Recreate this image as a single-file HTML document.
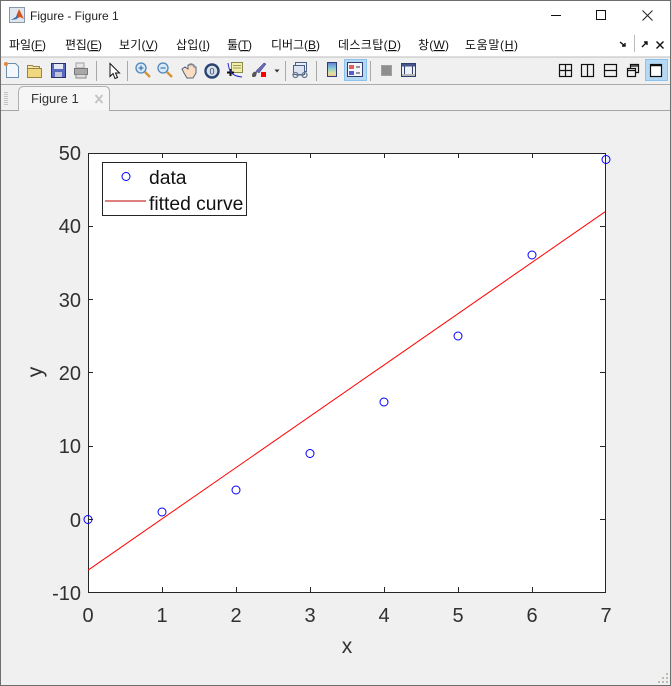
<!DOCTYPE html>
<html><head><meta charset="utf-8"><style>
html,body{margin:0;padding:0;background:#fff}
body{width:671px;height:686px;overflow:hidden}
svg{display:block}
.m{font:12px "Liberation Sans","Noto Sans CJK KR",sans-serif;fill:#111}
.m tspan{text-decoration:underline}
.t{font:20px "Liberation Sans",sans-serif;fill:#303030}
.l{font:19.300px "Liberation Sans",sans-serif;fill:#111}
</style></head><body>
<svg width="671" height="686" viewBox="0 0 671 686" xmlns="http://www.w3.org/2000/svg">
<rect width="671" height="686" fill="#fff"/>
<!-- chrome bands -->
<rect x="1" y="57" width="669" height="27" fill="#f0f0f0"/>
<rect x="1" y="85" width="669" height="600" fill="#f0f0f0"/>
<rect x="0" y="56.500" width="671" height="1" fill="#bdbdbd"/>
<rect x="0" y="84" width="671" height="1" fill="#ababab"/>
<rect x="0" y="110" width="671" height="1" fill="#a6a6a6"/>
<!-- window border -->
<rect x="0.500" y="0.500" width="670" height="685" fill="none" stroke="#6e6e6e"/>
<!-- title icon -->
<rect x="9.500" y="7.500" width="15" height="15" fill="#dfe6ee" stroke="#8a97a6"/>
<path d="M11 20l5-3 3-8 2 4 3 6-4-2-2 1z" fill="#d8541e"/>
<path d="M11 20l5-3 2-5-1 7z" fill="#2a6fb0"/>
<text x="30" y="20" style="font:12px 'Liberation Sans',sans-serif" fill="#222">Figure - Figure 1</text>
<!-- window buttons -->
<path d="M551 15.500h10" stroke="#111" fill="none"/>
<rect x="596.500" y="10.500" width="9" height="9" fill="none" stroke="#111"/>
<path d="M642.500 10.500l10 10m0-10l-10 10" stroke="#222" fill="none"/>
<!-- menu -->
<text class="m" x="9" y="49" textLength="37">파일(<tspan>F</tspan>)</text>
<text class="m" x="65" y="49" textLength="37">편집(<tspan>E</tspan>)</text>
<text class="m" x="119" y="49" textLength="39">보기(<tspan>V</tspan>)</text>
<text class="m" x="176" y="49" textLength="34">삽입(<tspan>I</tspan>)</text>
<text class="m" x="227" y="49" textLength="25">툴(<tspan>T</tspan>)</text>
<text class="m" x="271" y="49" textLength="49">디버그(<tspan>B</tspan>)</text>
<text class="m" x="338" y="49" textLength="63">데스크탑(<tspan>D</tspan>)</text>
<text class="m" x="418" y="49" textLength="31">창(<tspan>W</tspan>)</text>
<text class="m" x="465" y="49" textLength="53">도움말(<tspan>H</tspan>)</text>
<path d="M620 42l5 4m0-3v3h-3" stroke="#111" stroke-width="1.400" fill="none"/>
<rect x="634" y="35" width="1" height="17" fill="#bbb"/>
<path d="M642 47l5-5m-3 0h3v3" stroke="#111" stroke-width="1.400" fill="none"/>
<path d="M656.500 41.500l7 7m0-7l-7 7" stroke="#111" stroke-width="1.400" fill="none"/>
<!-- toolbar separators -->
<g fill="#a8a8a8">
<rect x="96" y="61" width="1" height="20"/><rect x="127" y="61" width="1" height="20"/>
<rect x="285" y="61" width="1" height="20"/><rect x="316" y="61" width="1" height="20"/><rect x="370" y="61" width="1" height="20"/>
</g>
<!-- new -->
<path d="M6.500 63.500h9l3 3v11h-12z" fill="#f4f8fc" stroke="#6a8fb0"/><circle cx="6" cy="64" r="2" fill="#e8873a"/>
<!-- open -->
<path d="M27.500 68.500v-3h5l1 1h6v2" fill="#f6e6a8" stroke="#9c8440"/><path d="M27.500 77.500v-9h14v9z" fill="#f1d77e" stroke="#9c8440"/>
<!-- save -->
<rect x="51.500" y="63.500" width="14" height="14" fill="#5a6ac0" stroke="#2a3270"/><rect x="54" y="64" width="9" height="5" fill="#e4e8f2"/><rect x="55" y="72" width="7" height="5" fill="#c2c6d2"/>
<!-- print -->
<path d="M76 63h8v5h-8z" fill="#e6e6e6" stroke="#a0a0a0"/><path d="M74.500 68.500h13v6h-13z" fill="#a8a8a8" stroke="#777"/><path d="M76 74.500h10v3.500h-10z" fill="#ddd" stroke="#888"/>
<!-- arrow -->
<path d="M110 63.500v13l3-3 2 5 2.500-1-2-4.500h4z" fill="#fff" stroke="#111"/>
<!-- zoom in/out -->
<circle cx="141" cy="68" r="5" fill="#d6eafa" stroke="#4d86b8" stroke-width="1.300"/><path d="M145 72l5 5" stroke="#d79234" stroke-width="2.400"/><path d="M138.500 68h5m-2.500-2.500v5" stroke="#2a5f96"/>
<circle cx="163" cy="68" r="5" fill="#d6eafa" stroke="#4d86b8" stroke-width="1.300"/><path d="M167 72l5 5" stroke="#d79234" stroke-width="2.400"/><path d="M160.500 68h5" stroke="#2a5f96"/>
<!-- hand -->
<path d="M182 69l2 4 3 5h6l3-5v-6h-2v-2h-2v-1h-2v1h-2v4l-3-2z" fill="#fbdcc0" stroke="#53637a"/>
<!-- rotate -->
<circle cx="212" cy="71" r="6.500" fill="#d7dfe8" stroke="#2b4470" stroke-width="2.400"/><text x="209.500" y="74.500" style="font:9px 'Liberation Sans',sans-serif" fill="#2b4470">0</text>
<!-- datatip -->
<rect x="231.500" y="62.500" width="11" height="10" fill="#f4eda8" stroke="#8a8a4a"/><path d="M233 65.500h8m-8 2.500h8" stroke="#9c9c5c"/><path d="M227 72.500h7m-3.500-3.500v7" stroke="#111" stroke-width="2"/><path d="M228 63c1 8 3 13 14 14" stroke="#22c" fill="none"/>
<!-- brush -->
<path d="M252 76c0-4 3-5 5-4l-1 4c-2 2-4 1-4 0z" fill="#555"/><path d="M256 71l8-8 2 1-7 9z" fill="#6a6ab8" stroke="#33337a" stroke-width=".5"/><rect x="261" y="72" width="5" height="5" fill="#f00"/>
<path d="M274.500 69.500h5l-2.500 3z" fill="#333"/>
<!-- link -->
<rect x="295.500" y="62.500" width="11" height="9" fill="#e8eef6" stroke="#4b5e86"/><rect x="293.500" y="65.500" width="11" height="9" fill="#dbe4f0" stroke="#4b5e86"/><path d="M296 75h8m-2 0a2.500 2.500 0 1 1 5 0a2.500 2.500 0 1 1-5 0m-9 0a2.500 2.500 0 1 1 5 0a2.500 2.500 0 1 1-5 0" stroke="#6a7a90" fill="none" stroke-width="1.300"/>
<!-- colorbar -->
<defs><linearGradient id="g" x1="0" y1="0" x2="0" y2="1"><stop offset="0" stop-color="#5f7fd8"/><stop offset=".45" stop-color="#8ecfd0"/><stop offset=".75" stop-color="#dfe0a0"/><stop offset="1" stop-color="#f2c2a0"/></linearGradient></defs>
<rect x="327.500" y="62.500" width="9" height="14" fill="url(#g)" stroke="#2f3f70"/>
<!-- legend btn -->
<rect x="344.500" y="59.500" width="22" height="21" fill="#b5d9f5" stroke="#8cc2ee"/>
<rect x="347.500" y="62.500" width="15" height="14" fill="#f6f7fa" stroke="#2f3f70"/><rect x="349" y="65" width="5" height="4" fill="#e06060"/><rect x="349" y="71" width="5" height="4" fill="#5a5ad8"/><path d="M356 67h4m-4 6h4" stroke="#333"/>
<!-- hide/show -->
<rect x="381.500" y="65.500" width="10" height="10" fill="#8e8e8e" stroke="#a0a0a0"/>
<rect x="401.500" y="63.500" width="14" height="13" fill="#eef1f6" stroke="#2f3f70"/><rect x="402" y="64" width="13" height="2.500" fill="#46568c"/><path d="M404.500 66v8m8-8v8" stroke="#2f3f70"/><rect x="402" y="74" width="13" height="2" fill="#b8b8b8"/>
<!-- layout buttons -->
<g fill="none" stroke="#111" stroke-width="1.200">
<rect x="559.500" y="64.500" width="12" height="12"/><path d="M565.500 64.500v12M559.500 70.500h12"/>
<rect x="581.500" y="64.500" width="12" height="12"/><path d="M587.500 64.500v12"/>
<rect x="604.500" y="64.500" width="12" height="12"/><path d="M604.500 70.500h12"/>
<rect x="627.500" y="68.500" width="8" height="8"/><path d="M630.500 68.500v-4h8v8h-3"/><path d="M627.500 70.500h8M630.500 66h8"/>
</g>
<rect x="645.500" y="59.500" width="22" height="21" fill="#b5d9f5" stroke="#8cc2ee"/>
<rect x="650.500" y="64.500" width="11" height="12" fill="#fff" stroke="#111" stroke-width="1.200"/><path d="M650 65.500h12" stroke="#111" stroke-width="1.500"/>
<!-- grip -->
<g fill="#c4c4c4"><rect x="4" y="92" width="4" height="1"/><rect x="4" y="94" width="4" height="1"/><rect x="4" y="96" width="4" height="1"/><rect x="4" y="98" width="4" height="1"/><rect x="4" y="100" width="4" height="1"/><rect x="4" y="102" width="4" height="1"/><rect x="4" y="104" width="4" height="1"/></g>
<!-- tab -->
<path d="M18.500 110.500v-18q0-6 6-6h80q5 0 5 5v19" fill="#f6f6f6" stroke="#b0b0b0"/>
<rect x="19" y="110" width="90" height="1" fill="#f0f0f0"/>
<text x="31" y="103" style="font:13px 'Liberation Sans',sans-serif" fill="#333">Figure  1</text>
<path d="M95.500 95l7 8m0-8l-7 8" stroke="#c4c4c4" stroke-width="2"/>
<!-- axes -->
<rect x="88" y="153" width="517" height="439" fill="#fff"/>
<g stroke="#262626" fill="none">
<path d="M88.500 153.500H605.500V592.500H88.500Z"/>
<path d="M162.500 592v-5M236.500 592v-5M310.500 592v-5M384.500 592v-5M458.500 592v-5M532.500 592v-5"/>
<path d="M162.500 153v5M236.500 153v5M310.500 153v5M384.500 153v5M458.500 153v5M532.500 153v5"/>
<path d="M88 226.500h5M88 299.500h5M88 372.500h5M88 446.500h5M88 519.500h5"/>
<path d="M605 226.500h-5M605 299.500h-5M605 372.500h-5M605 446.500h-5M605 519.500h-5"/>
</g>
<!-- curve -->
<path d="M88 570.200L605 211.800" stroke="#f00" stroke-width="1" fill="none"/>
<g fill="none" stroke="#00f">
<circle cx="88" cy="519.500" r="4"/><circle cx="162" cy="512" r="4"/><circle cx="236" cy="490" r="4"/><circle cx="310" cy="453.500" r="4"/><circle cx="384" cy="402" r="4"/><circle cx="458" cy="336" r="4"/><circle cx="532" cy="255" r="4"/><circle cx="606" cy="159.500" r="4"/>
</g>
<!-- tick labels -->
<text class="t" x="81" y="160" text-anchor="end">50</text>
<text class="t" x="81" y="233" text-anchor="end">40</text>
<text class="t" x="81" y="307" text-anchor="end">30</text>
<text class="t" x="81" y="380" text-anchor="end">20</text>
<text class="t" x="81" y="453" text-anchor="end">10</text>
<text class="t" x="81" y="527" text-anchor="end">0</text>
<text class="t" x="81" y="600" text-anchor="end">-10</text>
<text class="t" x="88" y="622" text-anchor="middle">0</text>
<text class="t" x="162" y="622" text-anchor="middle">1</text>
<text class="t" x="236" y="622" text-anchor="middle">2</text>
<text class="t" x="310" y="622" text-anchor="middle">3</text>
<text class="t" x="384" y="622" text-anchor="middle">4</text>
<text class="t" x="458" y="622" text-anchor="middle">5</text>
<text class="t" x="532" y="622" text-anchor="middle">6</text>
<text class="t" x="606" y="622" text-anchor="middle">7</text>
<text class="t" x="347" y="653" text-anchor="middle" style="font-size:21px">x</text>
<text class="t" transform="translate(42 372) rotate(-90)" text-anchor="middle" style="font-size:21px">y</text>
<!-- legend -->
<rect x="102.500" y="162.500" width="144" height="53" fill="#fff" stroke="#262626"/>
<circle cx="126" cy="176.500" r="4" fill="none" stroke="#00f"/>
<path d="M105 201h41" stroke="#b00" fill="none"/>
<text class="l" x="149" y="184">data</text>
<text class="l" x="149" y="210">fitted curve</text>
<!-- resize grip -->
<g fill="#bdbdb0"><rect x="666" y="673" width="2" height="2"/><rect x="662" y="677" width="2" height="2"/><rect x="666" y="677" width="2" height="2"/><rect x="658" y="681" width="2" height="2"/><rect x="662" y="681" width="2" height="2"/><rect x="666" y="681" width="2" height="2"/></g>
</svg>
</body></html>
